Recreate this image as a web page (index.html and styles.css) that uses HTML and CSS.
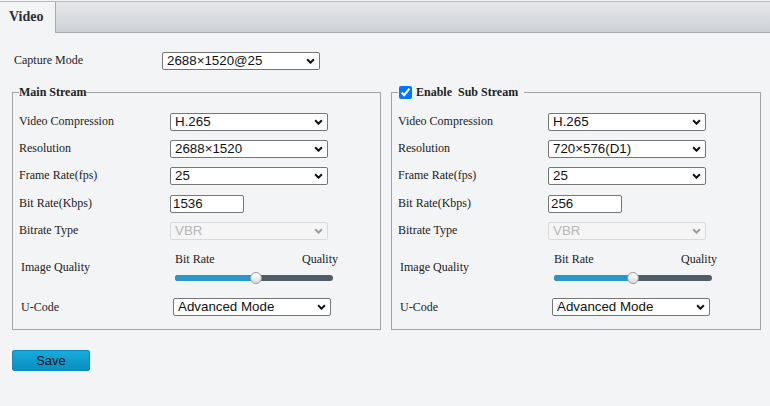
FILE: index.html
```html
<!DOCTYPE html>
<html lang="en">
<head>
  <meta charset="UTF-8" />
  <title>Video</title>
  <link rel="stylesheet" href="styles.css">
</head>
<body>
  <div class="tabs">
    <div class="tab">Video</div>
  </div>

  <div class="content">
    <div class="capture-row">
      <label>Capture Mode</label>
      <span class="sel">
        <select><option>2688×1520@25</option></select>
        <svg class="chev" viewBox="0 0 8 5"><path d="M1 1l3 3 3-3"/></svg>
      </span>
    </div>

    <div class="streams">
      <fieldset class="stream main">
        <legend>Main Stream</legend>
        <div class="row">
          <label>Video Compression</label>
          <span class="sel"><select><option>H.265</option></select><svg class="chev" viewBox="0 0 8 5"><path d="M1 1l3 3 3-3"/></svg></span>
        </div>
        <div class="row">
          <label>Resolution</label>
          <span class="sel"><select><option>2688×1520</option></select><svg class="chev" viewBox="0 0 8 5"><path d="M1 1l3 3 3-3"/></svg></span>
        </div>
        <div class="row">
          <label>Frame Rate(fps)</label>
          <span class="sel"><select><option>25</option></select><svg class="chev" viewBox="0 0 8 5"><path d="M1 1l3 3 3-3"/></svg></span>
        </div>
        <div class="row rate-row">
          <label>Bit Rate(Kbps)</label>
          <input type="text" class="txt" value="1536">
        </div>
        <div class="row">
          <label>Bitrate Type</label>
          <span class="sel disabled"><select disabled><option>VBR</option></select><svg class="chev" viewBox="0 0 8 5"><path d="M1 1l3 3 3-3"/></svg></span>
        </div>
        <div class="row iq-row">
          <label>Image Quality</label>
          <div class="slider">
            <div class="slider-labels"><span>Bit Rate</span><span>Quality</span></div>
            <div class="track"><div class="fill" style="width: 51%"></div><div class="thumb" style="left: 51%"></div></div>
          </div>
        </div>
        <div class="row ucode-row">
          <label>U-Code</label>
          <span class="sel"><select><option>Advanced Mode</option></select><svg class="chev" viewBox="0 0 8 5"><path d="M1 1l3 3 3-3"/></svg></span>
        </div>
      </fieldset>

      <fieldset class="stream sub">
        <legend><input type="checkbox" checked id="subStream"><label for="subStream">Enable&nbsp; Sub Stream</label></legend>
        <div class="row">
          <label>Video Compression</label>
          <span class="sel"><select><option>H.265</option></select><svg class="chev" viewBox="0 0 8 5"><path d="M1 1l3 3 3-3"/></svg></span>
        </div>
        <div class="row">
          <label>Resolution</label>
          <span class="sel"><select><option>720×576(D1)</option></select><svg class="chev" viewBox="0 0 8 5"><path d="M1 1l3 3 3-3"/></svg></span>
        </div>
        <div class="row">
          <label>Frame Rate(fps)</label>
          <span class="sel"><select><option>25</option></select><svg class="chev" viewBox="0 0 8 5"><path d="M1 1l3 3 3-3"/></svg></span>
        </div>
        <div class="row rate-row">
          <label>Bit Rate(Kbps)</label>
          <input type="text" class="txt" value="256">
        </div>
        <div class="row">
          <label>Bitrate Type</label>
          <span class="sel disabled"><select disabled><option>VBR</option></select><svg class="chev" viewBox="0 0 8 5"><path d="M1 1l3 3 3-3"/></svg></span>
        </div>
        <div class="row iq-row">
          <label>Image Quality</label>
          <div class="slider">
            <div class="slider-labels"><span>Bit Rate</span><span>Quality</span></div>
            <div class="track"><div class="fill" style="width: 50%"></div><div class="thumb" style="left: 50%"></div></div>
          </div>
        </div>
        <div class="row ucode-row">
          <label>U-Code</label>
          <span class="sel"><select><option>Advanced Mode</option></select><svg class="chev" viewBox="0 0 8 5"><path d="M1 1l3 3 3-3"/></svg></span>
        </div>
      </fieldset>
    </div>

    <button class="save">Save</button>
  </div>
</body>
</html>
```

FILE: styles.css
```css
* { box-sizing: border-box; }

body {
  margin: 0;
  background: #f3f4f6;
  font-family: "Liberation Serif", "Times New Roman", serif;
  font-size: 12px;
  color: #222;
}

.tabs {
  margin-top: 1px;
  height: 32px;
  border-top: 1px solid #b8b9bb;
  border-bottom: 1px solid #a9abae;
  background: linear-gradient(to bottom, #e6e7e9, #cdd1d6);
  display: flex;
}

.tab {
  width: 56px;
  height: 31px;
  background: #f3f4f6;
  border-right: 1px solid #a9abae;
  font-weight: bold;
  font-size: 14px;
  color: #2c2c3a;
  padding: 7px 0 0 9px;
}

.content {
  padding: 0 0 0 12px;
}

.capture-row {
  display: flex;
  align-items: center;
  height: 25px;
  margin-top: 15px;
  padding-left: 2px;
}

.capture-row label { width: 148px; }

.sel {
  position: relative;
  display: inline-block;
  width: 158px;
  height: 18px;
}

.sel select {
  appearance: none;
  -webkit-appearance: none;
  width: 100%;
  height: 100%;
  margin: 0;
  border: 1px solid #767676;
  border-radius: 2px;
  background: #fff;
  font-family: "Liberation Sans", Arial, sans-serif;
  font-size: 13.33px;
  color: #111;
  padding: 0 0 0 4px;
  line-height: 16px;
}

.chev {
  position: absolute;
  right: 5px;
  top: 6px;
  width: 9px;
  height: 6px;
  fill: none;
  stroke: #111;
  stroke-width: 1.8;
  pointer-events: none;
}

.sel.disabled select {
  border-color: #cfd0d2;
  background: #f6f6f7;
  color: #9c9c9c;
}

.sel.disabled .chev { stroke: #9c9c9c; }

.streams {
  display: flex;
  gap: 10px;
  margin-top: 12px;
}

.stream {
  margin: 0;
  border: 1px solid #a3a3a3;
  padding: 0 6px 6px 6px;
  min-width: 0;
}

.stream.main { width: 369px; }
.stream.sub { width: 370px; }

.stream legend {
  padding: 0;
  font-weight: bold;
  line-height: 15px;
}

.stream.sub legend {
  padding-right: 6px;
  display: flex;
  align-items: center;
}

.stream.sub legend input {
  margin: 0 4px 0 1px;
  width: 13px;
  height: 13px;
}

.row {
  display: flex;
  align-items: center;
  height: 27px;
}

.row:first-of-type { margin-top: 8px; }

.row > label { width: 151px; flex: none; }

.sub .row > label { width: 150px; }

.rate-row { height: 28px; padding-top: 1px; }

.txt {
  width: 74px;
  height: 18px;
  margin: 0;
  border: 1px solid #767676;
  border-radius: 2px;
  background: #fff;
  font-family: "Liberation Sans", Arial, sans-serif;
  font-size: 13.33px;
  color: #111;
  padding: 0 2px;
}

.iq-row { height: 47px; }

.main .iq-row > label,
.sub .iq-row > label { width: 156px; padding-left: 2px; }

.slider {
  width: 163px;
  height: 32px;
}

.slider-labels {
  display: flex;
  justify-content: space-between;
  line-height: 14px;
}

.track {
  position: relative;
  margin-top: 9px;
  width: 158px;
  height: 6px;
  border-radius: 3px;
  background: #505c67;
}

.fill {
  height: 100%;
  border-radius: 3px 0 0 3px;
  background: #2a97cb;
}

.thumb {
  position: absolute;
  top: -3px;
  width: 12px;
  height: 12px;
  margin-left: -6px;
  border-radius: 50%;
  background: linear-gradient(to bottom, #ffffff, #dcdcdc);
  border: 1px solid #9a9a9a;
}

.ucode-row { height: 32px; }

.main .ucode-row > label,
.sub .ucode-row > label { width: 154px; padding-left: 2px; }

.save {
  margin-top: 20px;
  width: 78px;
  height: 21px;
  border: 1px solid #0a8bbb;
  border-radius: 2px;
  background: linear-gradient(to bottom, #17abdc, #0a8ec0);
  font-family: "Liberation Sans", Arial, sans-serif;
  font-size: 13px;
  color: #161616;
  padding: 0;
}
```
